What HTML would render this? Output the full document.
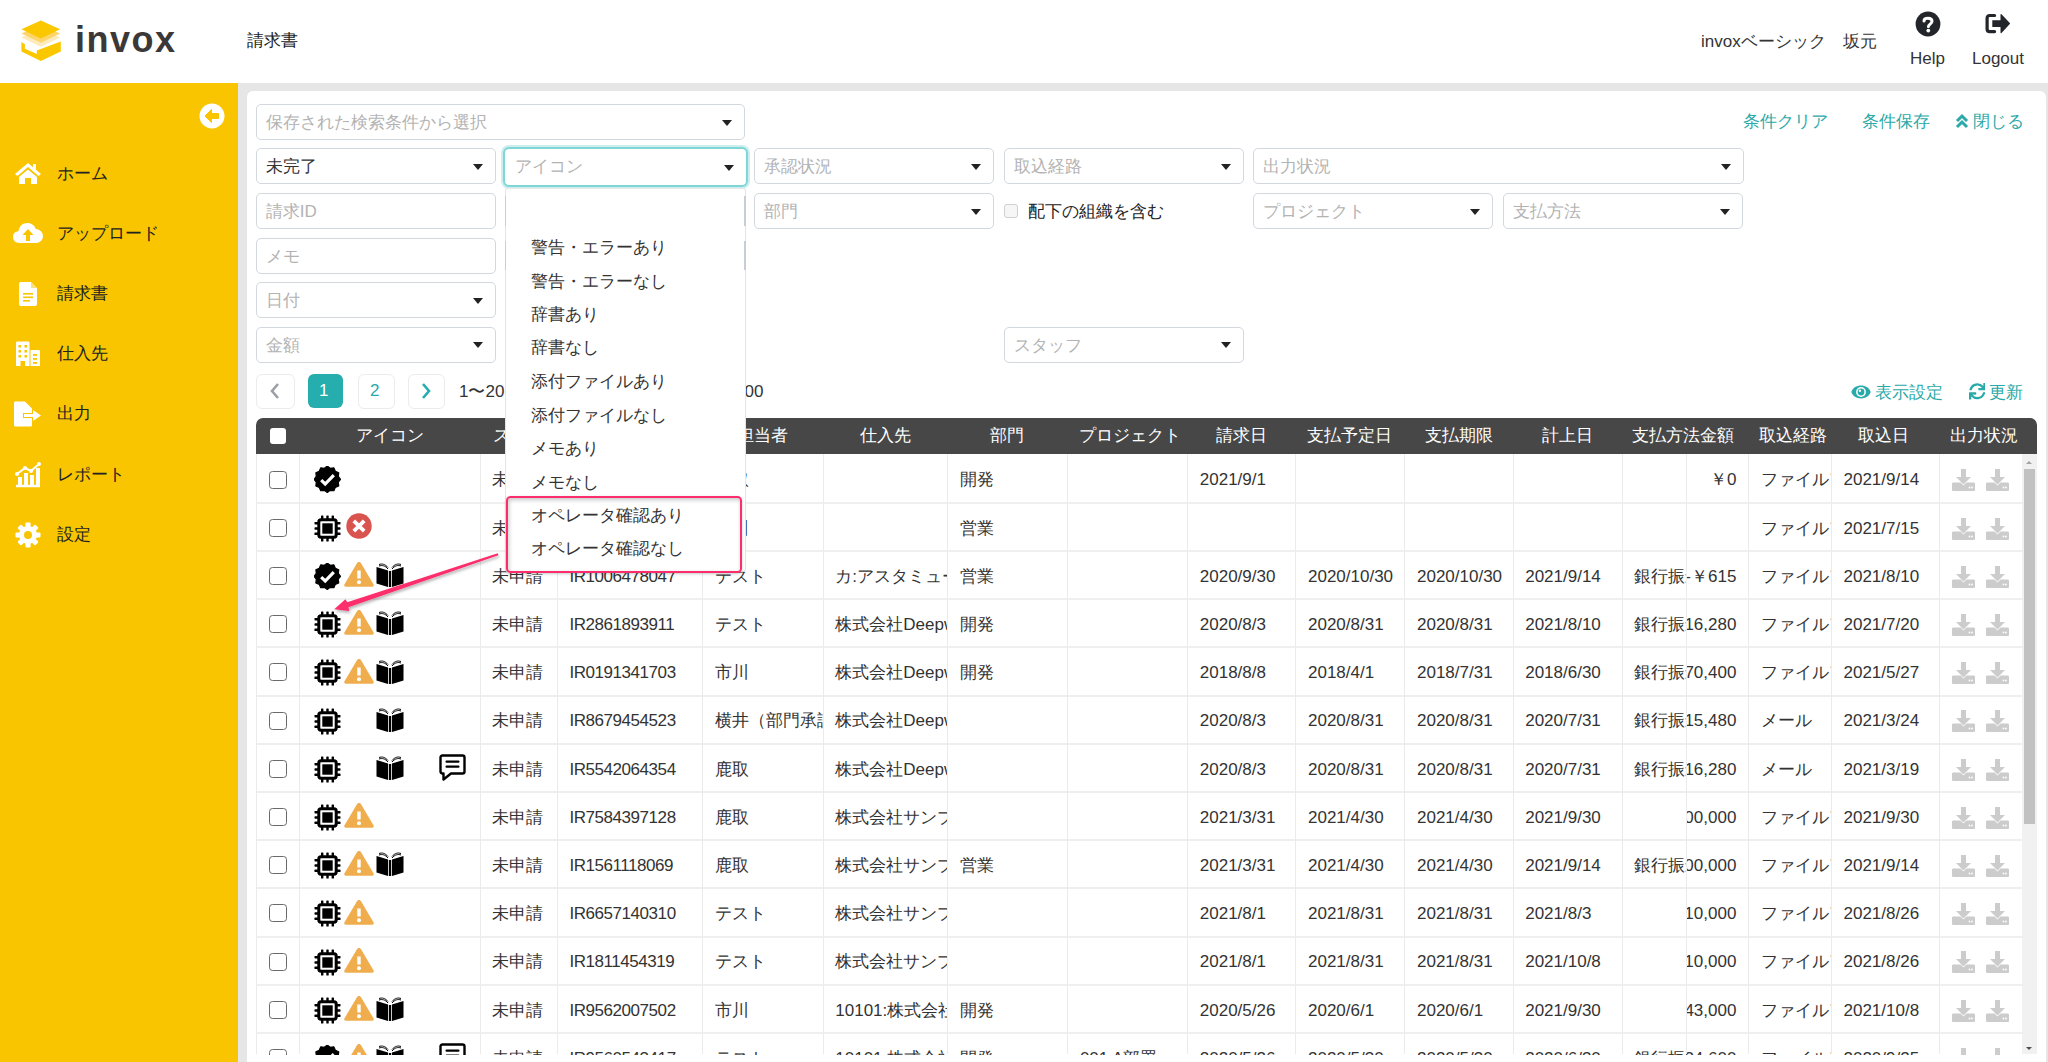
<!DOCTYPE html><html><head><meta charset="utf-8"><title>invox</title><style>
*{box-sizing:border-box;margin:0;padding:0}
html,body{width:2048px;height:1062px;overflow:hidden;background:#fff;font-family:"Liberation Sans",sans-serif;color:#333;}
.abs{position:absolute}
.t{position:absolute;white-space:nowrap;font-size:17px;line-height:20px}
.inp{position:absolute;height:36px;border:1.5px solid #d3d7de;border-radius:5px;background:#fff}
.inp .ph{position:absolute;left:9px;top:8px;font-size:17px;line-height:20px;color:#b3b3b3;white-space:nowrap}
.inp .v{position:absolute;left:9px;top:8px;font-size:17px;line-height:20px;color:#333;white-space:nowrap}
.caret{position:absolute;right:12px;top:14.5px;width:0;height:0;border-left:5px solid transparent;border-right:5px solid transparent;border-top:6px solid #222}
.nav{position:absolute;left:57px;font-size:17px;line-height:20px;color:#222;white-space:nowrap}
.teal{color:#2aa9a9}
.hl{position:absolute;height:2px;background:#efefef}
.vl{position:absolute;width:1px;background:#ebebeb}
.cell{position:absolute;overflow:hidden;white-space:nowrap;font-size:17px;line-height:20px;color:#333}
.cb{position:absolute;width:18px;height:18px;border:1.8px solid #6a6a6a;border-radius:3.5px;background:#fff}
.dd{position:absolute;font-size:17px;line-height:20px;color:#333;white-space:nowrap;left:531px}
</style></head><body>
<div class="abs" style="left:0;top:0;width:2048px;height:83px;background:#fff"></div>
<svg class="abs" style="left:20px;top:19px" width="42" height="44" viewBox="0 0 42 44">
<polygon points="1.4,18.5 20.8,9.6 40.2,18.5 20.8,27.8" fill="#feebbd"/>
<polygon points="1.4,14.4 20.8,5.5 40.2,14.4 20.8,23.7" fill="#fdd56a"/>
<polygon points="1.4,10.3 20.8,1.4 40.2,10.3 20.8,19.6" fill="#fbc800"/>
<polygon points="1.4,23.1 4.9,25.3 4.9,29.7 16.8,35 16.8,31.4 40.8,22.6 40.8,32.5 20.8,42 1.4,32.5" fill="#fbc800"/>
</svg>
<div class="t" style="left:75px;top:18px;font-size:36px;line-height:44px;font-weight:bold;color:#3c3838;letter-spacing:1.5px">invox</div>
<div class="t" style="left:247px;top:31px;color:#222">請求書</div>
<div class="t" style="left:1701px;top:32px;color:#333">invoxベーシック　坂元</div>
<svg class="abs" style="left:1914.5px;top:10.5px" width="26" height="26" viewBox="0 0 26 26">
<circle cx="13" cy="13" r="12.4" fill="#222529"/>
<path d="M9,10 C9,6.5 17,6.2 17,10.3 C17,13 13.6,13.2 13.4,15.6" stroke="#fff" stroke-width="3" fill="none" stroke-linecap="round"/>
<circle cx="13.3" cy="19.6" r="1.9" fill="#fff"/>
</svg>
<div class="t" style="left:1910px;top:49px;color:#333">Help</div>
<svg class="abs" style="left:1980px;top:10px" width="34" height="28" viewBox="0 0 34 28">
<path d="M14.6,5.5 H9.8 C8.2,5.5 7.1,6.5 7.1,8.2 V18.9 C7.1,20.6 8.2,21.6 9.8,21.6 H14.6" stroke="#222529" stroke-width="3.2" fill="none" stroke-linecap="round"/>
<path d="M12.3,10.2 H20.5 V4.6 C20.5,3.9 21,3.7 21.5,4.2 L29.8,13 C30.1,13.3 30.1,13.8 29.8,14.1 L21.5,22.9 C21,23.4 20.5,23.2 20.5,22.5 V17 H12.3 Z" fill="#222529"/>
</svg>
<div class="t" style="left:1972px;top:49px;color:#333">Logout</div>
<div class="abs" style="left:0;top:83px;width:238px;height:979px;background:#f8c500"></div>
<svg class="abs" style="left:199px;top:103px" width="26" height="26" viewBox="0 0 26 26">
<circle cx="13" cy="13" r="12.5" fill="#fff"/>
<path d="M6,13 L12.5,6.5 V10.5 H19.5 V15.5 H12.5 V19.5 Z" fill="#f8c500" stroke="#f8c500" stroke-width="1" stroke-linejoin="round"/>
</svg>
<div class="nav" style="top:163.7px">ホーム</div>
<div class="nav" style="top:223.7px">アップロード</div>
<div class="nav" style="top:283.7px">請求書</div>
<div class="nav" style="top:343.7px">仕入先</div>
<div class="nav" style="top:403.7px">出力</div>
<div class="nav" style="top:464.7px">レポート</div>
<div class="nav" style="top:524.7px">設定</div>
<svg class="abs" style="left:13px;top:161px" width="30" height="24" viewBox="0 0 30 24">
<path d="M15,2 L2,13 L4.5,15 L15,6 L25.5,15 L28,13 L23,8.8 V3 H20 V6.3 Z" fill="#fff"/>
<path d="M6,16 L15,8.5 L24,16 V23 H18 V17 H12 V23 H6 Z" fill="#fff"/>
</svg>
<svg class="abs" style="left:12px;top:221px" width="32" height="24" viewBox="0 0 32 24">
<path d="M8,22 C3,22 1,19 1,16 C1,12.5 3.5,10.5 6.5,10.3 C7,5.5 10.5,2 15.5,2 C19.5,2 22.5,4.5 23.8,8 C28,8.3 31,11.5 31,15.3 C31,19 28,22 24,22 Z" fill="#fff"/>
<path d="M16,8 L10.5,14 H14 V20 H18 V14 H21.5 Z" fill="#f8c500"/>
</svg>
<svg class="abs" style="left:17px;top:281px" width="22" height="26" viewBox="0 0 22 26">
<path d="M2,3 C2,1.5 3,1 4,1 H14 L20,7 V23 C20,24.5 19,25 18,25 H4 C3,25 2,24.5 2,23 Z" fill="#fff"/>
<path d="M14,1 V7 H20" fill="#f8c500" opacity="0.5"/>
<rect x="6" y="12" width="10" height="1.6" fill="#f8c500"/><rect x="6" y="15.5" width="10" height="1.6" fill="#f8c500"/><rect x="6" y="19" width="7" height="1.6" fill="#f8c500"/>
</svg>
<svg class="abs" style="left:15px;top:341px" width="26" height="26" viewBox="0 0 26 26">
<path d="M1,25 V2 C1,1 1.5,0.5 2.5,0.5 H13 C14,0.5 14.5,1 14.5,2 V25 H10 V20 H5.5 V25 Z" fill="#fff"/>
<path d="M15.5,25 V9 H23.5 C24.5,9 25,9.5 25,10.5 V25 Z" fill="#fff"/>
<g fill="#f8c500"><rect x="3.5" y="4" width="2.5" height="2.5"/><rect x="9.5" y="4" width="2.5" height="2.5"/><rect x="3.5" y="9" width="2.5" height="2.5"/><rect x="9.5" y="9" width="2.5" height="2.5"/><rect x="3.5" y="14" width="2.5" height="2.5"/><rect x="9.5" y="14" width="2.5" height="2.5"/>
<rect x="18" y="13" width="4" height="1.8"/><rect x="18" y="17" width="4" height="1.8"/><rect x="18" y="21" width="4" height="1.8"/></g>
</svg>
<svg class="abs" style="left:13px;top:401px" width="30" height="26" viewBox="0 0 30 26">
<path d="M1,2 C1,1 1.5,0.5 2.5,0.5 H12 L19,7.5 V12 H10 V17 H19 V24 C19,25 18.5,25.5 17.5,25.5 H2.5 C1.5,25.5 1,25 1,24 Z" fill="#fff"/>
<path d="M11,13 H20 V9 L28,14.5 L20,20 V16 H11 Z" fill="#fff"/>
</svg>
<svg class="abs" style="left:14px;top:462px" width="28" height="26" viewBox="0 0 28 26">
<path d="M2,24 H26" stroke="#fff" stroke-width="2.5"/>
<rect x="4" y="15" width="4" height="8" fill="#fff"/><rect x="10" y="11" width="4" height="12" fill="#fff"/><rect x="16" y="13" width="4" height="10" fill="#fff"/><rect x="22" y="6" width="4" height="17" fill="#fff"/>
<path d="M3,12 L11,6 L17,9 L25,2" stroke="#fff" stroke-width="2" fill="none"/>
<circle cx="3" cy="12" r="2" fill="#fff"/><circle cx="11" cy="6" r="2" fill="#fff"/><circle cx="17" cy="9" r="2" fill="#fff"/><circle cx="25" cy="2" r="2" fill="#fff"/>
</svg>
<svg class="abs" style="left:15px;top:522px" width="26" height="26" viewBox="0 0 26 26">
<path fill="#fff" d="M11,1 H15 L15.8,4.6 C16.9,4.9 17.9,5.4 18.8,6 L22,4 L24.8,6.8 L22.8,10 C23.4,10.9 23.8,11.9 24.1,13 L27.5,13.8 V17.8 L24.1,18.6 L24,18.7" transform="translate(-1.5,-2.8)" opacity="0"/>
<g transform="translate(13,13)" fill="#fff">
<circle r="9"/>
<rect x="-2.6" y="-12.5" width="5.2" height="6" rx="1"/>
<rect x="-2.6" y="-12.5" width="5.2" height="6" rx="1" transform="rotate(45)"/>
<rect x="-2.6" y="-12.5" width="5.2" height="6" rx="1" transform="rotate(90)"/>
<rect x="-2.6" y="-12.5" width="5.2" height="6" rx="1" transform="rotate(135)"/>
<rect x="-2.6" y="-12.5" width="5.2" height="6" rx="1" transform="rotate(180)"/>
<rect x="-2.6" y="-12.5" width="5.2" height="6" rx="1" transform="rotate(225)"/>
<rect x="-2.6" y="-12.5" width="5.2" height="6" rx="1" transform="rotate(270)"/>
<rect x="-2.6" y="-12.5" width="5.2" height="6" rx="1" transform="rotate(315)"/>
<circle r="4" fill="#f8c500"/>
</g>
</svg>
<div class="abs" style="left:238px;top:83px;width:1810px;height:979px;background:#e6e6e6"></div>
<div class="abs" style="left:247px;top:91px;width:1799px;height:1000px;background:#fff;border-radius:6px"></div>
<div class="inp" style="left:255.8px;top:104.2px;width:489.2px;"><div class="ph">保存された検索条件から選択</div><div class="caret"></div></div>
<div class="inp" style="left:255.8px;top:148.4px;width:240.0px;"><div class="v">未完了</div><div class="caret"></div></div>
<div class="inp" style="left:754.4px;top:148.4px;width:240.0px;"><div class="ph">承認状況</div><div class="caret"></div></div>
<div class="inp" style="left:1004.0px;top:148.4px;width:240.0px;"><div class="ph">取込経路</div><div class="caret"></div></div>
<div class="inp" style="left:1253.0px;top:148.4px;width:489.2px;width:491px"><div class="ph">出力状況</div><div class="caret"></div></div>
<div class="inp" style="left:255.8px;top:193.2px;width:240.0px;"><div class="ph">請求ID</div></div>
<div class="inp" style="left:505.0px;top:193.2px;width:240.0px;"><div class="ph"></div></div>
<div class="inp" style="left:754.4px;top:193.2px;width:240.0px;"><div class="ph">部門</div><div class="caret"></div></div>
<div class="abs" style="left:1004.3px;top:203.8px;width:14px;height:14px;border:1.5px solid #d0d0d0;border-radius:3px;background:#f6f6f6"></div>
<div class="t" style="left:1028px;top:202px;color:#222">配下の組織を含む</div>
<div class="inp" style="left:1253.0px;top:193.2px;width:240.0px;"><div class="ph">プロジェクト</div><div class="caret"></div></div>
<div class="inp" style="left:1502.5px;top:193.2px;width:240.0px;"><div class="ph">支払方法</div><div class="caret"></div></div>
<div class="inp" style="left:255.8px;top:237.7px;width:240.0px;"><div class="ph">メモ</div></div>
<div class="inp" style="left:505.0px;top:237.7px;width:240.0px;"><div class="ph"></div></div>
<div class="inp" style="left:255.8px;top:282.2px;width:240.0px;"><div class="ph">日付</div><div class="caret"></div></div>
<div class="inp" style="left:255.8px;top:326.7px;width:240.0px;"><div class="ph">金額</div><div class="caret"></div></div>
<div class="inp" style="left:1004.0px;top:326.7px;width:240.0px;"><div class="ph">スタッフ</div><div class="caret"></div></div>
<div class="inp" style="left:503px;top:146.5px;width:245px;height:40px;border:2px solid #7fd6d6;box-shadow:0 0 0 2px #cdeeee;border-radius:6px"><div class="ph" style="left:10px;top:8.5px">アイコン</div><div class="caret" style="right:12px;top:16px"></div></div>
<div class="t teal" style="left:1743px;top:112px">条件クリア</div>
<div class="t teal" style="left:1862px;top:112px">条件保存</div>
<svg class="abs" style="left:1955px;top:113px" width="14" height="17" viewBox="0 0 14 17"><path d="M2,8 L7,3 L12,8 M2,14 L7,9 L12,14" stroke="#2aa9a9" stroke-width="3" fill="none" stroke-linejoin="miter"/></svg>
<div class="t teal" style="left:1973px;top:112px">閉じる</div>
<div class="abs" style="left:256px;top:373.6px;width:38.5px;height:35px;border:1px solid #ececec;border-radius:6px"></div>
<svg class="abs" style="left:268px;top:382px" width="14" height="18" viewBox="0 0 14 18"><path d="M10,2 L4,9 L10,16" stroke="#9aa0a6" stroke-width="2.6" fill="none"/></svg>
<div class="abs" style="left:308px;top:374.2px;width:35px;height:33.6px;background:#26adad;border-radius:6px"></div>
<div class="t" style="left:319px;top:381px;color:#fff">1</div>
<div class="abs" style="left:357.5px;top:373.6px;width:37px;height:35px;border:1px solid #ececec;border-radius:6px"></div>
<div class="t teal" style="left:370px;top:381px">2</div>
<div class="abs" style="left:407.5px;top:373.6px;width:37.5px;height:35px;border:1px solid #ececec;border-radius:6px"></div>
<svg class="abs" style="left:419px;top:382px" width="14" height="18" viewBox="0 0 14 18"><path d="M4,2 L10,9 L4,16" stroke="#26adad" stroke-width="2.6" fill="none"/></svg>
<div class="t" style="left:459px;top:382px;color:#333">1〜20</div>
<div class="t" style="left:735px;top:382px;color:#333">200</div>
<svg class="abs" style="left:1851px;top:384.5px" width="20" height="14" viewBox="0 0 20 14"><path d="M0.3,7 C3,-1.6 17,-1.6 19.7,7 C17,15.6 3,15.6 0.3,7 Z" fill="#2aa9a9"/><circle cx="10" cy="7" r="4.9" fill="#fff"/><circle cx="10" cy="7" r="3.4" fill="#2aa9a9"/><circle cx="8.9" cy="5.8" r="1.2" fill="#fff"/></svg>
<div class="t teal" style="left:1875px;top:383px">表示設定</div>
<svg class="abs" style="left:1968.6px;top:383.2px" width="16.6" height="16.6" viewBox="0 0 512 512"><path fill="#2aa9a9" d="M440.65 12.57l4 82.77A247.16 247.16 0 0 0 255.83 8C134.730 8 33.91 94.92 12.29 209.82A12 12 0 0 0 24.09 224h49.05a12 12 0 0 0 11.67-9.26 175.910 175.910 0 0 1 317-56.94l-101.46-4.86a12 12 0 0 0-12.570 12v47.41a12 12 0 0 0 12 12H500a12 12 0 0 0 12-12V12a12 12 0 0 0-12-12h-47.37a12 12 0 0 0-11.98 12.57zM255.83 432a175.61 175.61 0 0 1-146-77.8l101.8 4.87a12 12 0 0 0 12.57-12v-47.4a12 12 0 0 0-12-12H12a12 12 0 0 0-12 12V500a12 12 0 0 0 12 12h47.350a12 12 0 0 0 12-12.6l-4.15-82.57A247.17 247.17 0 0 0 255.83 504c121.11 0 221.93-86.92 243.55-201.82a12 12 0 0 0-11.8-14.18h-49.05a12 12 0 0 0-11.67 9.26A175.86 175.86 0 0 1 255.83 432z"/></svg>
<div class="t teal" style="left:1989px;top:383px">更新</div>
<div class="abs" style="left:255.6px;top:418.0px;width:1781.1px;height:636.5px;overflow:hidden">
<div class="abs" style="left:0;top:0;width:1781.1px;height:36.2px;background:#474747;border-radius:7px 7px 0 0"></div>
<div class="abs" style="left:14.2px;top:9.8px;width:16.5px;height:16.5px;background:#fff;border-radius:3px"></div>
<div class="cell" style="left:43.8px;top:8px;width:180.6px;text-align:center;color:#fff;overflow:visible">アイコン</div>
<div class="cell" style="left:237.4px;top:8px;width:120px;color:#fff;overflow:visible">ステータス</div>
<div class="cell" style="left:301.4px;top:8px;width:145.5px;text-align:center;color:#fff;overflow:visible">請求ID</div>
<div class="cell" style="left:446.9px;top:8px;width:120.3px;text-align:center;color:#fff;overflow:visible">担当者</div>
<div class="cell" style="left:567.2px;top:8px;width:124.6px;text-align:center;color:#fff;overflow:visible">仕入先</div>
<div class="cell" style="left:691.8px;top:8px;width:120.0px;text-align:center;color:#fff;overflow:visible">部門</div>
<div class="cell" style="left:814.3px;top:8px;width:119.9px;text-align:center;color:#fff;overflow:visible">プロジェクト</div>
<div class="cell" style="left:931.7px;top:8px;width:108.2px;text-align:center;color:#fff;overflow:visible">請求日</div>
<div class="cell" style="left:1039.9px;top:8px;width:109.0px;text-align:center;color:#fff;overflow:visible">支払予定日</div>
<div class="cell" style="left:1148.9px;top:8px;width:108.2px;text-align:center;color:#fff;overflow:visible">支払期限</div>
<div class="cell" style="left:1257.1px;top:8px;width:108.9px;text-align:center;color:#fff;overflow:visible">計上日</div>
<div class="cell" style="left:1364.5px;top:8px;width:126.8px;text-align:center;color:#fff;overflow:visible">支払方法金額</div>
<div class="cell" style="left:1496.3px;top:8px;width:82.6px;text-align:center;color:#fff;overflow:visible">取込経路</div>
<div class="cell" style="left:1573.7px;top:8px;width:108.3px;text-align:center;color:#fff;overflow:visible">取込日</div>
<div class="cell" style="left:1686.7px;top:8px;width:84.2px;text-align:center;color:#fff;overflow:visible">出力状況</div>
<div class="hl" style="left:0;top:84px;width:1767.9px"></div>
<svg class="abs" style="left:58.9px;top:48.3px" width="27" height="27" viewBox="0 0 27 27"><polygon points="13.30,0.10 16.25,2.29 19.90,1.87 21.36,5.24 24.73,6.70 24.31,10.35 26.50,13.30 24.31,16.25 24.73,19.90 21.36,21.36 19.90,24.73 16.25,24.31 13.30,26.50 10.35,24.31 6.70,24.73 5.24,21.36 1.87,19.90 2.29,16.25 0.10,13.30 2.29,10.35 1.87,6.70 5.24,5.24 6.70,1.87 10.35,2.29" fill="#000" stroke="#000" stroke-width="1.2" stroke-linejoin="round"/><path d="M7.2,14.2 L11.2,18 L19.8,9.2" stroke="#fff" stroke-width="3.2" fill="none" stroke-linecap="butt"/></svg>
<div class="cell" style="left:224.4px;top:52.3px;width:77.0px;height:24px;padding-left:12.5px;">未申請</div>
<div class="cell" style="left:301.4px;top:52.3px;width:145.5px;height:24px;padding-left:12.5px;letter-spacing:-0.45px;">IR1009954432</div>
<div class="cell" style="left:446.9px;top:52.3px;width:120.3px;height:24px;padding-left:12.5px;">鹿取</div>
<div class="cell" style="left:691.8px;top:52.3px;width:120.0px;height:24px;padding-left:12.5px;">開発</div>
<div class="cell" style="left:931.7px;top:52.3px;width:108.2px;height:24px;padding-left:12.5px;">2021/9/1</div>
<div class="cell" style="left:1430.7px;top:52.3px;width:62.1px;height:24px"><div style="position:absolute;right:12px;top:0">￥0</div></div>
<div class="cell" style="left:1492.8px;top:52.3px;width:82.6px;height:24px;padding-left:12.5px;">ファイルアップロード</div>
<div class="cell" style="left:1575.4px;top:52.3px;width:108.3px;height:24px;padding-left:12.5px;">2021/9/14</div>
<svg class="abs" style="left:1695.9px;top:50.3px" width="25" height="24" viewBox="0 0 25 24"><rect x="10" y="1" width="5" height="9" fill="#cccccc"/><path d="M5,9 H20 L12.5,16.5 Z" fill="#cccccc"/><path d="M1,16 C1,15 1.5,14.5 2.5,14.5 H9.5 L12.5,17.5 L15.5,14.5 H22.5 C23.5,14.5 24,15 24,16 V21.5 C24,22.5 23.5,23 22.5,23 H2.5 C1.5,23 1,22.5 1,21.5 Z" fill="#cccccc"/><circle cx="18.5" cy="19.5" r="0.9" fill="#fff"/><circle cx="21" cy="19.5" r="0.9" fill="#fff"/></svg>
<svg class="abs" style="left:1729.2px;top:50.3px" width="25" height="24" viewBox="0 0 25 24"><rect x="10" y="1" width="5" height="9" fill="#cccccc"/><path d="M5,9 H20 L12.5,16.5 Z" fill="#cccccc"/><path d="M1,16 C1,15 1.5,14.5 2.5,14.5 H9.5 L12.5,17.5 L15.5,14.5 H22.5 C23.5,14.5 24,15 24,16 V21.5 C24,22.5 23.5,23 22.5,23 H2.5 C1.5,23 1,22.5 1,21.5 Z" fill="#cccccc"/><circle cx="18.5" cy="19.5" r="0.9" fill="#fff"/><circle cx="21" cy="19.5" r="0.9" fill="#fff"/></svg>
<div class="hl" style="left:0;top:132px;width:1767.9px"></div>
<svg class="abs" style="left:58.9px;top:96.7px" width="27" height="27" viewBox="0 0 27 27"><rect x="4.8" y="4.8" width="17.4" height="17.4" rx="2.2" fill="none" stroke="#000" stroke-width="3"/><rect x="8.3" y="8.3" width="10.4" height="10.4" fill="#000"/><rect x="7.0" y="0.5" width="2.4" height="4" rx="0.6" fill="#000"/><rect x="7.0" y="22.5" width="2.4" height="4" rx="0.6" fill="#000"/><rect y="7.0" x="0.5" height="2.4" width="4" rx="0.6" fill="#000"/><rect y="7.0" x="22.5" height="2.4" width="4" rx="0.6" fill="#000"/><rect x="12.3" y="0.5" width="2.4" height="4" rx="0.6" fill="#000"/><rect x="12.3" y="22.5" width="2.4" height="4" rx="0.6" fill="#000"/><rect y="12.3" x="0.5" height="2.4" width="4" rx="0.6" fill="#000"/><rect y="12.3" x="22.5" height="2.4" width="4" rx="0.6" fill="#000"/><rect x="17.6" y="0.5" width="2.4" height="4" rx="0.6" fill="#000"/><rect x="17.6" y="22.5" width="2.4" height="4" rx="0.6" fill="#000"/><rect y="17.6" x="0.5" height="2.4" width="4" rx="0.6" fill="#000"/><rect y="17.6" x="22.5" height="2.4" width="4" rx="0.6" fill="#000"/></svg>
<svg class="abs" style="left:90.4px;top:95.2px" width="26" height="26" viewBox="0 0 26 26"><circle cx="13" cy="13" r="12.7" fill="#d9534f"/><path d="M7.8,7.8 L18.2,18.2 M18.2,7.8 L7.8,18.2" stroke="#fff" stroke-width="3.8"/></svg>
<div class="cell" style="left:224.4px;top:100.5px;width:77.0px;height:24px;padding-left:12.5px;">未申請</div>
<div class="cell" style="left:301.4px;top:100.5px;width:145.5px;height:24px;padding-left:12.5px;letter-spacing:-0.45px;">IR1008859931</div>
<div class="cell" style="left:446.9px;top:100.5px;width:120.3px;height:24px;padding-left:12.5px;">市川</div>
<div class="cell" style="left:691.8px;top:100.5px;width:120.0px;height:24px;padding-left:12.5px;">営業</div>
<div class="cell" style="left:1492.8px;top:100.5px;width:82.6px;height:24px;padding-left:12.5px;">ファイルアップロード</div>
<div class="cell" style="left:1575.4px;top:100.5px;width:108.3px;height:24px;padding-left:12.5px;">2021/7/15</div>
<svg class="abs" style="left:1695.9px;top:98.5px" width="25" height="24" viewBox="0 0 25 24"><rect x="10" y="1" width="5" height="9" fill="#cccccc"/><path d="M5,9 H20 L12.5,16.5 Z" fill="#cccccc"/><path d="M1,16 C1,15 1.5,14.5 2.5,14.5 H9.5 L12.5,17.5 L15.5,14.5 H22.5 C23.5,14.5 24,15 24,16 V21.5 C24,22.5 23.5,23 22.5,23 H2.5 C1.5,23 1,22.5 1,21.5 Z" fill="#cccccc"/><circle cx="18.5" cy="19.5" r="0.9" fill="#fff"/><circle cx="21" cy="19.5" r="0.9" fill="#fff"/></svg>
<svg class="abs" style="left:1729.2px;top:98.5px" width="25" height="24" viewBox="0 0 25 24"><rect x="10" y="1" width="5" height="9" fill="#cccccc"/><path d="M5,9 H20 L12.5,16.5 Z" fill="#cccccc"/><path d="M1,16 C1,15 1.5,14.5 2.5,14.5 H9.5 L12.5,17.5 L15.5,14.5 H22.5 C23.5,14.5 24,15 24,16 V21.5 C24,22.5 23.5,23 22.5,23 H2.5 C1.5,23 1,22.5 1,21.5 Z" fill="#cccccc"/><circle cx="18.5" cy="19.5" r="0.9" fill="#fff"/><circle cx="21" cy="19.5" r="0.9" fill="#fff"/></svg>
<div class="hl" style="left:0;top:180px;width:1767.9px"></div>
<svg class="abs" style="left:58.9px;top:144.7px" width="27" height="27" viewBox="0 0 27 27"><polygon points="13.30,0.10 16.25,2.29 19.90,1.87 21.36,5.24 24.73,6.70 24.31,10.35 26.50,13.30 24.31,16.25 24.73,19.90 21.36,21.36 19.90,24.73 16.25,24.31 13.30,26.50 10.35,24.31 6.70,24.73 5.24,21.36 1.87,19.90 2.29,16.25 0.10,13.30 2.29,10.35 1.87,6.70 5.24,5.24 6.70,1.87 10.35,2.29" fill="#000" stroke="#000" stroke-width="1.2" stroke-linejoin="round"/><path d="M7.2,14.2 L11.2,18 L19.8,9.2" stroke="#fff" stroke-width="3.2" fill="none" stroke-linecap="butt"/></svg>
<svg class="abs" style="left:88.4px;top:143.2px" width="30" height="27" viewBox="0 0 30 27"><path d="M15,1 C16,1 16.6,1.5 17.2,2.5 L29.6,23.5 C30.2,24.6 29.6,25.8 28.2,25.8 H1.8 C0.4,25.8 -0.2,24.6 0.4,23.5 L12.8,2.5 C13.4,1.5 14,1 15,1 Z" fill="#f0ad4e"/><rect x="13.3" y="9.5" width="3.4" height="8" fill="#fff"/><circle cx="15" cy="21.2" r="2" fill="#fff"/></svg>
<svg class="abs" style="left:120.9px;top:144.2px" width="28" height="26" viewBox="0 0 28 26"><path d="M0.5,5 L12,8.5 V25 L0.5,21.5 Z" fill="#000"/><path d="M27.5,5 L16,8.5 V25 L27.5,21.5 Z" fill="#000"/><rect x="12.8" y="9" width="2.4" height="16" fill="#000"/><path d="M3,4 C6,3 9,3.5 12,7 M25,4 C22,3 19,3.5 16,7 M3,2.5 C6,1.5 9,2 12,5.5 M25,2.5 C22,1.5 19,2 16,5.5" stroke="#000" stroke-width="1" fill="none"/></svg>
<div class="cell" style="left:224.4px;top:148.7px;width:77.0px;height:24px;padding-left:12.5px;">未申請</div>
<div class="cell" style="left:301.4px;top:148.7px;width:145.5px;height:24px;padding-left:12.5px;letter-spacing:-0.45px;">IR1006478047</div>
<div class="cell" style="left:446.9px;top:148.7px;width:120.3px;height:24px;padding-left:12.5px;">テスト</div>
<div class="cell" style="left:567.2px;top:148.7px;width:124.6px;height:24px;padding-left:12.5px;">カ:アスタミュージック</div>
<div class="cell" style="left:691.8px;top:148.7px;width:120.0px;height:24px;padding-left:12.5px;">営業</div>
<div class="cell" style="left:931.7px;top:148.7px;width:108.2px;height:24px;padding-left:12.5px;">2020/9/30</div>
<div class="cell" style="left:1039.9px;top:148.7px;width:109.0px;height:24px;padding-left:12.5px;">2020/10/30</div>
<div class="cell" style="left:1148.9px;top:148.7px;width:108.2px;height:24px;padding-left:12.5px;">2020/10/30</div>
<div class="cell" style="left:1257.1px;top:148.7px;width:108.9px;height:24px;padding-left:12.5px;">2021/9/14</div>
<div class="cell" style="left:1366.0px;top:148.7px;width:64.7px;height:24px;padding-left:12.5px;">銀行振込</div>
<div class="cell" style="left:1430.7px;top:148.7px;width:62.1px;height:24px"><div style="position:absolute;right:12px;top:0">-￥615</div></div>
<div class="cell" style="left:1492.8px;top:148.7px;width:82.6px;height:24px;padding-left:12.5px;">ファイルアップロード</div>
<div class="cell" style="left:1575.4px;top:148.7px;width:108.3px;height:24px;padding-left:12.5px;">2021/8/10</div>
<svg class="abs" style="left:1695.9px;top:146.7px" width="25" height="24" viewBox="0 0 25 24"><rect x="10" y="1" width="5" height="9" fill="#cccccc"/><path d="M5,9 H20 L12.5,16.5 Z" fill="#cccccc"/><path d="M1,16 C1,15 1.5,14.5 2.5,14.5 H9.5 L12.5,17.5 L15.5,14.5 H22.5 C23.5,14.5 24,15 24,16 V21.5 C24,22.5 23.5,23 22.5,23 H2.5 C1.5,23 1,22.5 1,21.5 Z" fill="#cccccc"/><circle cx="18.5" cy="19.5" r="0.9" fill="#fff"/><circle cx="21" cy="19.5" r="0.9" fill="#fff"/></svg>
<svg class="abs" style="left:1729.2px;top:146.7px" width="25" height="24" viewBox="0 0 25 24"><rect x="10" y="1" width="5" height="9" fill="#cccccc"/><path d="M5,9 H20 L12.5,16.5 Z" fill="#cccccc"/><path d="M1,16 C1,15 1.5,14.5 2.5,14.5 H9.5 L12.5,17.5 L15.5,14.5 H22.5 C23.5,14.5 24,15 24,16 V21.5 C24,22.5 23.5,23 22.5,23 H2.5 C1.5,23 1,22.5 1,21.5 Z" fill="#cccccc"/><circle cx="18.5" cy="19.5" r="0.9" fill="#fff"/><circle cx="21" cy="19.5" r="0.9" fill="#fff"/></svg>
<div class="hl" style="left:0;top:228px;width:1767.9px"></div>
<svg class="abs" style="left:58.9px;top:193.1px" width="27" height="27" viewBox="0 0 27 27"><rect x="4.8" y="4.8" width="17.4" height="17.4" rx="2.2" fill="none" stroke="#000" stroke-width="3"/><rect x="8.3" y="8.3" width="10.4" height="10.4" fill="#000"/><rect x="7.0" y="0.5" width="2.4" height="4" rx="0.6" fill="#000"/><rect x="7.0" y="22.5" width="2.4" height="4" rx="0.6" fill="#000"/><rect y="7.0" x="0.5" height="2.4" width="4" rx="0.6" fill="#000"/><rect y="7.0" x="22.5" height="2.4" width="4" rx="0.6" fill="#000"/><rect x="12.3" y="0.5" width="2.4" height="4" rx="0.6" fill="#000"/><rect x="12.3" y="22.5" width="2.4" height="4" rx="0.6" fill="#000"/><rect y="12.3" x="0.5" height="2.4" width="4" rx="0.6" fill="#000"/><rect y="12.3" x="22.5" height="2.4" width="4" rx="0.6" fill="#000"/><rect x="17.6" y="0.5" width="2.4" height="4" rx="0.6" fill="#000"/><rect x="17.6" y="22.5" width="2.4" height="4" rx="0.6" fill="#000"/><rect y="17.6" x="0.5" height="2.4" width="4" rx="0.6" fill="#000"/><rect y="17.6" x="22.5" height="2.4" width="4" rx="0.6" fill="#000"/></svg>
<svg class="abs" style="left:88.4px;top:191.4px" width="30" height="27" viewBox="0 0 30 27"><path d="M15,1 C16,1 16.6,1.5 17.2,2.5 L29.6,23.5 C30.2,24.6 29.6,25.8 28.2,25.8 H1.8 C0.4,25.8 -0.2,24.6 0.4,23.5 L12.8,2.5 C13.4,1.5 14,1 15,1 Z" fill="#f0ad4e"/><rect x="13.3" y="9.5" width="3.4" height="8" fill="#fff"/><circle cx="15" cy="21.2" r="2" fill="#fff"/></svg>
<svg class="abs" style="left:120.9px;top:192.4px" width="28" height="26" viewBox="0 0 28 26"><path d="M0.5,5 L12,8.5 V25 L0.5,21.5 Z" fill="#000"/><path d="M27.5,5 L16,8.5 V25 L27.5,21.5 Z" fill="#000"/><rect x="12.8" y="9" width="2.4" height="16" fill="#000"/><path d="M3,4 C6,3 9,3.5 12,7 M25,4 C22,3 19,3.5 16,7 M3,2.5 C6,1.5 9,2 12,5.5 M25,2.5 C22,1.5 19,2 16,5.5" stroke="#000" stroke-width="1" fill="none"/></svg>
<div class="cell" style="left:224.4px;top:196.9px;width:77.0px;height:24px;padding-left:12.5px;">未申請</div>
<div class="cell" style="left:301.4px;top:196.9px;width:145.5px;height:24px;padding-left:12.5px;letter-spacing:-0.45px;">IR2861893911</div>
<div class="cell" style="left:446.9px;top:196.9px;width:120.3px;height:24px;padding-left:12.5px;">テスト</div>
<div class="cell" style="left:567.2px;top:196.9px;width:124.6px;height:24px;padding-left:12.5px;">株式会社Deepwork</div>
<div class="cell" style="left:691.8px;top:196.9px;width:120.0px;height:24px;padding-left:12.5px;">開発</div>
<div class="cell" style="left:931.7px;top:196.9px;width:108.2px;height:24px;padding-left:12.5px;">2020/8/3</div>
<div class="cell" style="left:1039.9px;top:196.9px;width:109.0px;height:24px;padding-left:12.5px;">2020/8/31</div>
<div class="cell" style="left:1148.9px;top:196.9px;width:108.2px;height:24px;padding-left:12.5px;">2020/8/31</div>
<div class="cell" style="left:1257.1px;top:196.9px;width:108.9px;height:24px;padding-left:12.5px;">2021/8/10</div>
<div class="cell" style="left:1366.0px;top:196.9px;width:64.7px;height:24px;padding-left:12.5px;">銀行振込</div>
<div class="cell" style="left:1430.7px;top:196.9px;width:62.1px;height:24px"><div style="position:absolute;right:12px;top:0">16,280</div></div>
<div class="cell" style="left:1492.8px;top:196.9px;width:82.6px;height:24px;padding-left:12.5px;">ファイルアップロード</div>
<div class="cell" style="left:1575.4px;top:196.9px;width:108.3px;height:24px;padding-left:12.5px;">2021/7/20</div>
<svg class="abs" style="left:1695.9px;top:194.9px" width="25" height="24" viewBox="0 0 25 24"><rect x="10" y="1" width="5" height="9" fill="#cccccc"/><path d="M5,9 H20 L12.5,16.5 Z" fill="#cccccc"/><path d="M1,16 C1,15 1.5,14.5 2.5,14.5 H9.5 L12.5,17.5 L15.5,14.5 H22.5 C23.5,14.5 24,15 24,16 V21.5 C24,22.5 23.5,23 22.5,23 H2.5 C1.5,23 1,22.5 1,21.5 Z" fill="#cccccc"/><circle cx="18.5" cy="19.5" r="0.9" fill="#fff"/><circle cx="21" cy="19.5" r="0.9" fill="#fff"/></svg>
<svg class="abs" style="left:1729.2px;top:194.9px" width="25" height="24" viewBox="0 0 25 24"><rect x="10" y="1" width="5" height="9" fill="#cccccc"/><path d="M5,9 H20 L12.5,16.5 Z" fill="#cccccc"/><path d="M1,16 C1,15 1.5,14.5 2.5,14.5 H9.5 L12.5,17.5 L15.5,14.5 H22.5 C23.5,14.5 24,15 24,16 V21.5 C24,22.5 23.5,23 22.5,23 H2.5 C1.5,23 1,22.5 1,21.5 Z" fill="#cccccc"/><circle cx="18.5" cy="19.5" r="0.9" fill="#fff"/><circle cx="21" cy="19.5" r="0.9" fill="#fff"/></svg>
<div class="hl" style="left:0;top:277px;width:1767.9px"></div>
<svg class="abs" style="left:58.9px;top:241.3px" width="27" height="27" viewBox="0 0 27 27"><rect x="4.8" y="4.8" width="17.4" height="17.4" rx="2.2" fill="none" stroke="#000" stroke-width="3"/><rect x="8.3" y="8.3" width="10.4" height="10.4" fill="#000"/><rect x="7.0" y="0.5" width="2.4" height="4" rx="0.6" fill="#000"/><rect x="7.0" y="22.5" width="2.4" height="4" rx="0.6" fill="#000"/><rect y="7.0" x="0.5" height="2.4" width="4" rx="0.6" fill="#000"/><rect y="7.0" x="22.5" height="2.4" width="4" rx="0.6" fill="#000"/><rect x="12.3" y="0.5" width="2.4" height="4" rx="0.6" fill="#000"/><rect x="12.3" y="22.5" width="2.4" height="4" rx="0.6" fill="#000"/><rect y="12.3" x="0.5" height="2.4" width="4" rx="0.6" fill="#000"/><rect y="12.3" x="22.5" height="2.4" width="4" rx="0.6" fill="#000"/><rect x="17.6" y="0.5" width="2.4" height="4" rx="0.6" fill="#000"/><rect x="17.6" y="22.5" width="2.4" height="4" rx="0.6" fill="#000"/><rect y="17.6" x="0.5" height="2.4" width="4" rx="0.6" fill="#000"/><rect y="17.6" x="22.5" height="2.4" width="4" rx="0.6" fill="#000"/></svg>
<svg class="abs" style="left:88.4px;top:239.6px" width="30" height="27" viewBox="0 0 30 27"><path d="M15,1 C16,1 16.6,1.5 17.2,2.5 L29.6,23.5 C30.2,24.6 29.6,25.8 28.2,25.8 H1.8 C0.4,25.8 -0.2,24.6 0.4,23.5 L12.8,2.5 C13.4,1.5 14,1 15,1 Z" fill="#f0ad4e"/><rect x="13.3" y="9.5" width="3.4" height="8" fill="#fff"/><circle cx="15" cy="21.2" r="2" fill="#fff"/></svg>
<svg class="abs" style="left:120.9px;top:240.6px" width="28" height="26" viewBox="0 0 28 26"><path d="M0.5,5 L12,8.5 V25 L0.5,21.5 Z" fill="#000"/><path d="M27.5,5 L16,8.5 V25 L27.5,21.5 Z" fill="#000"/><rect x="12.8" y="9" width="2.4" height="16" fill="#000"/><path d="M3,4 C6,3 9,3.5 12,7 M25,4 C22,3 19,3.5 16,7 M3,2.5 C6,1.5 9,2 12,5.5 M25,2.5 C22,1.5 19,2 16,5.5" stroke="#000" stroke-width="1" fill="none"/></svg>
<div class="cell" style="left:224.4px;top:245.1px;width:77.0px;height:24px;padding-left:12.5px;">未申請</div>
<div class="cell" style="left:301.4px;top:245.1px;width:145.5px;height:24px;padding-left:12.5px;letter-spacing:-0.45px;">IR0191341703</div>
<div class="cell" style="left:446.9px;top:245.1px;width:120.3px;height:24px;padding-left:12.5px;">市川</div>
<div class="cell" style="left:567.2px;top:245.1px;width:124.6px;height:24px;padding-left:12.5px;">株式会社Deepwork</div>
<div class="cell" style="left:691.8px;top:245.1px;width:120.0px;height:24px;padding-left:12.5px;">開発</div>
<div class="cell" style="left:931.7px;top:245.1px;width:108.2px;height:24px;padding-left:12.5px;">2018/8/8</div>
<div class="cell" style="left:1039.9px;top:245.1px;width:109.0px;height:24px;padding-left:12.5px;">2018/4/1</div>
<div class="cell" style="left:1148.9px;top:245.1px;width:108.2px;height:24px;padding-left:12.5px;">2018/7/31</div>
<div class="cell" style="left:1257.1px;top:245.1px;width:108.9px;height:24px;padding-left:12.5px;">2018/6/30</div>
<div class="cell" style="left:1366.0px;top:245.1px;width:64.7px;height:24px;padding-left:12.5px;">銀行振込</div>
<div class="cell" style="left:1430.7px;top:245.1px;width:62.1px;height:24px"><div style="position:absolute;right:12px;top:0">70,400</div></div>
<div class="cell" style="left:1492.8px;top:245.1px;width:82.6px;height:24px;padding-left:12.5px;">ファイルアップロード</div>
<div class="cell" style="left:1575.4px;top:245.1px;width:108.3px;height:24px;padding-left:12.5px;">2021/5/27</div>
<svg class="abs" style="left:1695.9px;top:243.1px" width="25" height="24" viewBox="0 0 25 24"><rect x="10" y="1" width="5" height="9" fill="#cccccc"/><path d="M5,9 H20 L12.5,16.5 Z" fill="#cccccc"/><path d="M1,16 C1,15 1.5,14.5 2.5,14.5 H9.5 L12.5,17.5 L15.5,14.5 H22.5 C23.5,14.5 24,15 24,16 V21.5 C24,22.5 23.5,23 22.5,23 H2.5 C1.5,23 1,22.5 1,21.5 Z" fill="#cccccc"/><circle cx="18.5" cy="19.5" r="0.9" fill="#fff"/><circle cx="21" cy="19.5" r="0.9" fill="#fff"/></svg>
<svg class="abs" style="left:1729.2px;top:243.1px" width="25" height="24" viewBox="0 0 25 24"><rect x="10" y="1" width="5" height="9" fill="#cccccc"/><path d="M5,9 H20 L12.5,16.5 Z" fill="#cccccc"/><path d="M1,16 C1,15 1.5,14.5 2.5,14.5 H9.5 L12.5,17.5 L15.5,14.5 H22.5 C23.5,14.5 24,15 24,16 V21.5 C24,22.5 23.5,23 22.5,23 H2.5 C1.5,23 1,22.5 1,21.5 Z" fill="#cccccc"/><circle cx="18.5" cy="19.5" r="0.9" fill="#fff"/><circle cx="21" cy="19.5" r="0.9" fill="#fff"/></svg>
<div class="hl" style="left:0;top:325px;width:1767.9px"></div>
<svg class="abs" style="left:58.9px;top:289.5px" width="27" height="27" viewBox="0 0 27 27"><rect x="4.8" y="4.8" width="17.4" height="17.4" rx="2.2" fill="none" stroke="#000" stroke-width="3"/><rect x="8.3" y="8.3" width="10.4" height="10.4" fill="#000"/><rect x="7.0" y="0.5" width="2.4" height="4" rx="0.6" fill="#000"/><rect x="7.0" y="22.5" width="2.4" height="4" rx="0.6" fill="#000"/><rect y="7.0" x="0.5" height="2.4" width="4" rx="0.6" fill="#000"/><rect y="7.0" x="22.5" height="2.4" width="4" rx="0.6" fill="#000"/><rect x="12.3" y="0.5" width="2.4" height="4" rx="0.6" fill="#000"/><rect x="12.3" y="22.5" width="2.4" height="4" rx="0.6" fill="#000"/><rect y="12.3" x="0.5" height="2.4" width="4" rx="0.6" fill="#000"/><rect y="12.3" x="22.5" height="2.4" width="4" rx="0.6" fill="#000"/><rect x="17.6" y="0.5" width="2.4" height="4" rx="0.6" fill="#000"/><rect x="17.6" y="22.5" width="2.4" height="4" rx="0.6" fill="#000"/><rect y="17.6" x="0.5" height="2.4" width="4" rx="0.6" fill="#000"/><rect y="17.6" x="22.5" height="2.4" width="4" rx="0.6" fill="#000"/></svg>
<svg class="abs" style="left:120.9px;top:288.8px" width="28" height="26" viewBox="0 0 28 26"><path d="M0.5,5 L12,8.5 V25 L0.5,21.5 Z" fill="#000"/><path d="M27.5,5 L16,8.5 V25 L27.5,21.5 Z" fill="#000"/><rect x="12.8" y="9" width="2.4" height="16" fill="#000"/><path d="M3,4 C6,3 9,3.5 12,7 M25,4 C22,3 19,3.5 16,7 M3,2.5 C6,1.5 9,2 12,5.5 M25,2.5 C22,1.5 19,2 16,5.5" stroke="#000" stroke-width="1" fill="none"/></svg>
<div class="cell" style="left:224.4px;top:293.3px;width:77.0px;height:24px;padding-left:12.5px;">未申請</div>
<div class="cell" style="left:301.4px;top:293.3px;width:145.5px;height:24px;padding-left:12.5px;letter-spacing:-0.45px;">IR8679454523</div>
<div class="cell" style="left:446.9px;top:293.3px;width:120.3px;height:24px;padding-left:12.5px;">横井（部門承認者）</div>
<div class="cell" style="left:567.2px;top:293.3px;width:124.6px;height:24px;padding-left:12.5px;">株式会社Deepwork</div>
<div class="cell" style="left:931.7px;top:293.3px;width:108.2px;height:24px;padding-left:12.5px;">2020/8/3</div>
<div class="cell" style="left:1039.9px;top:293.3px;width:109.0px;height:24px;padding-left:12.5px;">2020/8/31</div>
<div class="cell" style="left:1148.9px;top:293.3px;width:108.2px;height:24px;padding-left:12.5px;">2020/8/31</div>
<div class="cell" style="left:1257.1px;top:293.3px;width:108.9px;height:24px;padding-left:12.5px;">2020/7/31</div>
<div class="cell" style="left:1366.0px;top:293.3px;width:64.7px;height:24px;padding-left:12.5px;">銀行振込</div>
<div class="cell" style="left:1430.7px;top:293.3px;width:62.1px;height:24px"><div style="position:absolute;right:12px;top:0">15,480</div></div>
<div class="cell" style="left:1492.8px;top:293.3px;width:82.6px;height:24px;padding-left:12.5px;">メール</div>
<div class="cell" style="left:1575.4px;top:293.3px;width:108.3px;height:24px;padding-left:12.5px;">2021/3/24</div>
<svg class="abs" style="left:1695.9px;top:291.3px" width="25" height="24" viewBox="0 0 25 24"><rect x="10" y="1" width="5" height="9" fill="#cccccc"/><path d="M5,9 H20 L12.5,16.5 Z" fill="#cccccc"/><path d="M1,16 C1,15 1.5,14.5 2.5,14.5 H9.5 L12.5,17.5 L15.5,14.5 H22.5 C23.5,14.5 24,15 24,16 V21.5 C24,22.5 23.5,23 22.5,23 H2.5 C1.5,23 1,22.5 1,21.5 Z" fill="#cccccc"/><circle cx="18.5" cy="19.5" r="0.9" fill="#fff"/><circle cx="21" cy="19.5" r="0.9" fill="#fff"/></svg>
<svg class="abs" style="left:1729.2px;top:291.3px" width="25" height="24" viewBox="0 0 25 24"><rect x="10" y="1" width="5" height="9" fill="#cccccc"/><path d="M5,9 H20 L12.5,16.5 Z" fill="#cccccc"/><path d="M1,16 C1,15 1.5,14.5 2.5,14.5 H9.5 L12.5,17.5 L15.5,14.5 H22.5 C23.5,14.5 24,15 24,16 V21.5 C24,22.5 23.5,23 22.5,23 H2.5 C1.5,23 1,22.5 1,21.5 Z" fill="#cccccc"/><circle cx="18.5" cy="19.5" r="0.9" fill="#fff"/><circle cx="21" cy="19.5" r="0.9" fill="#fff"/></svg>
<div class="hl" style="left:0;top:373px;width:1767.9px"></div>
<svg class="abs" style="left:58.9px;top:337.7px" width="27" height="27" viewBox="0 0 27 27"><rect x="4.8" y="4.8" width="17.4" height="17.4" rx="2.2" fill="none" stroke="#000" stroke-width="3"/><rect x="8.3" y="8.3" width="10.4" height="10.4" fill="#000"/><rect x="7.0" y="0.5" width="2.4" height="4" rx="0.6" fill="#000"/><rect x="7.0" y="22.5" width="2.4" height="4" rx="0.6" fill="#000"/><rect y="7.0" x="0.5" height="2.4" width="4" rx="0.6" fill="#000"/><rect y="7.0" x="22.5" height="2.4" width="4" rx="0.6" fill="#000"/><rect x="12.3" y="0.5" width="2.4" height="4" rx="0.6" fill="#000"/><rect x="12.3" y="22.5" width="2.4" height="4" rx="0.6" fill="#000"/><rect y="12.3" x="0.5" height="2.4" width="4" rx="0.6" fill="#000"/><rect y="12.3" x="22.5" height="2.4" width="4" rx="0.6" fill="#000"/><rect x="17.6" y="0.5" width="2.4" height="4" rx="0.6" fill="#000"/><rect x="17.6" y="22.5" width="2.4" height="4" rx="0.6" fill="#000"/><rect y="17.6" x="0.5" height="2.4" width="4" rx="0.6" fill="#000"/><rect y="17.6" x="22.5" height="2.4" width="4" rx="0.6" fill="#000"/></svg>
<svg class="abs" style="left:120.9px;top:337.0px" width="28" height="26" viewBox="0 0 28 26"><path d="M0.5,5 L12,8.5 V25 L0.5,21.5 Z" fill="#000"/><path d="M27.5,5 L16,8.5 V25 L27.5,21.5 Z" fill="#000"/><rect x="12.8" y="9" width="2.4" height="16" fill="#000"/><path d="M3,4 C6,3 9,3.5 12,7 M25,4 C22,3 19,3.5 16,7 M3,2.5 C6,1.5 9,2 12,5.5 M25,2.5 C22,1.5 19,2 16,5.5" stroke="#000" stroke-width="1" fill="none"/></svg>
<svg class="abs" style="left:183.9px;top:336.0px" width="27" height="27" viewBox="0 0 27 27"><path d="M3.5,1.5 H23.5 C24.7,1.5 25.5,2.3 25.5,3.5 V17.5 C25.5,18.7 24.7,19.5 23.5,19.5 H12 L4.5,25.5 V19.5 H3.5 C2.3,19.5 1.5,18.7 1.5,17.5 V3.5 C1.5,2.3 2.3,1.5 3.5,1.5 Z" fill="none" stroke="#000" stroke-width="2.4" stroke-linejoin="round"/><rect x="6.5" y="6.5" width="14" height="2.2" rx="1" fill="#000"/><rect x="6.5" y="11.5" width="14" height="2.2" rx="1" fill="#000"/></svg>
<div class="cell" style="left:224.4px;top:341.5px;width:77.0px;height:24px;padding-left:12.5px;">未申請</div>
<div class="cell" style="left:301.4px;top:341.5px;width:145.5px;height:24px;padding-left:12.5px;letter-spacing:-0.45px;">IR5542064354</div>
<div class="cell" style="left:446.9px;top:341.5px;width:120.3px;height:24px;padding-left:12.5px;">鹿取</div>
<div class="cell" style="left:567.2px;top:341.5px;width:124.6px;height:24px;padding-left:12.5px;">株式会社Deepwork</div>
<div class="cell" style="left:931.7px;top:341.5px;width:108.2px;height:24px;padding-left:12.5px;">2020/8/3</div>
<div class="cell" style="left:1039.9px;top:341.5px;width:109.0px;height:24px;padding-left:12.5px;">2020/8/31</div>
<div class="cell" style="left:1148.9px;top:341.5px;width:108.2px;height:24px;padding-left:12.5px;">2020/8/31</div>
<div class="cell" style="left:1257.1px;top:341.5px;width:108.9px;height:24px;padding-left:12.5px;">2020/7/31</div>
<div class="cell" style="left:1366.0px;top:341.5px;width:64.7px;height:24px;padding-left:12.5px;">銀行振込</div>
<div class="cell" style="left:1430.7px;top:341.5px;width:62.1px;height:24px"><div style="position:absolute;right:12px;top:0">16,280</div></div>
<div class="cell" style="left:1492.8px;top:341.5px;width:82.6px;height:24px;padding-left:12.5px;">メール</div>
<div class="cell" style="left:1575.4px;top:341.5px;width:108.3px;height:24px;padding-left:12.5px;">2021/3/19</div>
<svg class="abs" style="left:1695.9px;top:339.5px" width="25" height="24" viewBox="0 0 25 24"><rect x="10" y="1" width="5" height="9" fill="#cccccc"/><path d="M5,9 H20 L12.5,16.5 Z" fill="#cccccc"/><path d="M1,16 C1,15 1.5,14.5 2.5,14.5 H9.5 L12.5,17.5 L15.5,14.5 H22.5 C23.5,14.5 24,15 24,16 V21.5 C24,22.5 23.5,23 22.5,23 H2.5 C1.5,23 1,22.5 1,21.5 Z" fill="#cccccc"/><circle cx="18.5" cy="19.5" r="0.9" fill="#fff"/><circle cx="21" cy="19.5" r="0.9" fill="#fff"/></svg>
<svg class="abs" style="left:1729.2px;top:339.5px" width="25" height="24" viewBox="0 0 25 24"><rect x="10" y="1" width="5" height="9" fill="#cccccc"/><path d="M5,9 H20 L12.5,16.5 Z" fill="#cccccc"/><path d="M1,16 C1,15 1.5,14.5 2.5,14.5 H9.5 L12.5,17.5 L15.5,14.5 H22.5 C23.5,14.5 24,15 24,16 V21.5 C24,22.5 23.5,23 22.5,23 H2.5 C1.5,23 1,22.5 1,21.5 Z" fill="#cccccc"/><circle cx="18.5" cy="19.5" r="0.9" fill="#fff"/><circle cx="21" cy="19.5" r="0.9" fill="#fff"/></svg>
<div class="hl" style="left:0;top:421px;width:1767.9px"></div>
<svg class="abs" style="left:58.9px;top:385.9px" width="27" height="27" viewBox="0 0 27 27"><rect x="4.8" y="4.8" width="17.4" height="17.4" rx="2.2" fill="none" stroke="#000" stroke-width="3"/><rect x="8.3" y="8.3" width="10.4" height="10.4" fill="#000"/><rect x="7.0" y="0.5" width="2.4" height="4" rx="0.6" fill="#000"/><rect x="7.0" y="22.5" width="2.4" height="4" rx="0.6" fill="#000"/><rect y="7.0" x="0.5" height="2.4" width="4" rx="0.6" fill="#000"/><rect y="7.0" x="22.5" height="2.4" width="4" rx="0.6" fill="#000"/><rect x="12.3" y="0.5" width="2.4" height="4" rx="0.6" fill="#000"/><rect x="12.3" y="22.5" width="2.4" height="4" rx="0.6" fill="#000"/><rect y="12.3" x="0.5" height="2.4" width="4" rx="0.6" fill="#000"/><rect y="12.3" x="22.5" height="2.4" width="4" rx="0.6" fill="#000"/><rect x="17.6" y="0.5" width="2.4" height="4" rx="0.6" fill="#000"/><rect x="17.6" y="22.5" width="2.4" height="4" rx="0.6" fill="#000"/><rect y="17.6" x="0.5" height="2.4" width="4" rx="0.6" fill="#000"/><rect y="17.6" x="22.5" height="2.4" width="4" rx="0.6" fill="#000"/></svg>
<svg class="abs" style="left:88.4px;top:384.2px" width="30" height="27" viewBox="0 0 30 27"><path d="M15,1 C16,1 16.6,1.5 17.2,2.5 L29.6,23.5 C30.2,24.6 29.6,25.8 28.2,25.8 H1.8 C0.4,25.8 -0.2,24.6 0.4,23.5 L12.8,2.5 C13.4,1.5 14,1 15,1 Z" fill="#f0ad4e"/><rect x="13.3" y="9.5" width="3.4" height="8" fill="#fff"/><circle cx="15" cy="21.2" r="2" fill="#fff"/></svg>
<div class="cell" style="left:224.4px;top:389.7px;width:77.0px;height:24px;padding-left:12.5px;">未申請</div>
<div class="cell" style="left:301.4px;top:389.7px;width:145.5px;height:24px;padding-left:12.5px;letter-spacing:-0.45px;">IR7584397128</div>
<div class="cell" style="left:446.9px;top:389.7px;width:120.3px;height:24px;padding-left:12.5px;">鹿取</div>
<div class="cell" style="left:567.2px;top:389.7px;width:124.6px;height:24px;padding-left:12.5px;">株式会社サンプル</div>
<div class="cell" style="left:931.7px;top:389.7px;width:108.2px;height:24px;padding-left:12.5px;">2021/3/31</div>
<div class="cell" style="left:1039.9px;top:389.7px;width:109.0px;height:24px;padding-left:12.5px;">2021/4/30</div>
<div class="cell" style="left:1148.9px;top:389.7px;width:108.2px;height:24px;padding-left:12.5px;">2021/4/30</div>
<div class="cell" style="left:1257.1px;top:389.7px;width:108.9px;height:24px;padding-left:12.5px;">2021/9/30</div>
<div class="cell" style="left:1430.7px;top:389.7px;width:62.1px;height:24px"><div style="position:absolute;right:12px;top:0">1,100,000</div></div>
<div class="cell" style="left:1492.8px;top:389.7px;width:82.6px;height:24px;padding-left:12.5px;">ファイルアップロード</div>
<div class="cell" style="left:1575.4px;top:389.7px;width:108.3px;height:24px;padding-left:12.5px;">2021/9/30</div>
<svg class="abs" style="left:1695.9px;top:387.7px" width="25" height="24" viewBox="0 0 25 24"><rect x="10" y="1" width="5" height="9" fill="#cccccc"/><path d="M5,9 H20 L12.5,16.5 Z" fill="#cccccc"/><path d="M1,16 C1,15 1.5,14.5 2.5,14.5 H9.5 L12.5,17.5 L15.5,14.5 H22.5 C23.5,14.5 24,15 24,16 V21.5 C24,22.5 23.5,23 22.5,23 H2.5 C1.5,23 1,22.5 1,21.5 Z" fill="#cccccc"/><circle cx="18.5" cy="19.5" r="0.9" fill="#fff"/><circle cx="21" cy="19.5" r="0.9" fill="#fff"/></svg>
<svg class="abs" style="left:1729.2px;top:387.7px" width="25" height="24" viewBox="0 0 25 24"><rect x="10" y="1" width="5" height="9" fill="#cccccc"/><path d="M5,9 H20 L12.5,16.5 Z" fill="#cccccc"/><path d="M1,16 C1,15 1.5,14.5 2.5,14.5 H9.5 L12.5,17.5 L15.5,14.5 H22.5 C23.5,14.5 24,15 24,16 V21.5 C24,22.5 23.5,23 22.5,23 H2.5 C1.5,23 1,22.5 1,21.5 Z" fill="#cccccc"/><circle cx="18.5" cy="19.5" r="0.9" fill="#fff"/><circle cx="21" cy="19.5" r="0.9" fill="#fff"/></svg>
<div class="hl" style="left:0;top:469px;width:1767.9px"></div>
<svg class="abs" style="left:58.9px;top:434.1px" width="27" height="27" viewBox="0 0 27 27"><rect x="4.8" y="4.8" width="17.4" height="17.4" rx="2.2" fill="none" stroke="#000" stroke-width="3"/><rect x="8.3" y="8.3" width="10.4" height="10.4" fill="#000"/><rect x="7.0" y="0.5" width="2.4" height="4" rx="0.6" fill="#000"/><rect x="7.0" y="22.5" width="2.4" height="4" rx="0.6" fill="#000"/><rect y="7.0" x="0.5" height="2.4" width="4" rx="0.6" fill="#000"/><rect y="7.0" x="22.5" height="2.4" width="4" rx="0.6" fill="#000"/><rect x="12.3" y="0.5" width="2.4" height="4" rx="0.6" fill="#000"/><rect x="12.3" y="22.5" width="2.4" height="4" rx="0.6" fill="#000"/><rect y="12.3" x="0.5" height="2.4" width="4" rx="0.6" fill="#000"/><rect y="12.3" x="22.5" height="2.4" width="4" rx="0.6" fill="#000"/><rect x="17.6" y="0.5" width="2.4" height="4" rx="0.6" fill="#000"/><rect x="17.6" y="22.5" width="2.4" height="4" rx="0.6" fill="#000"/><rect y="17.6" x="0.5" height="2.4" width="4" rx="0.6" fill="#000"/><rect y="17.6" x="22.5" height="2.4" width="4" rx="0.6" fill="#000"/></svg>
<svg class="abs" style="left:88.4px;top:432.4px" width="30" height="27" viewBox="0 0 30 27"><path d="M15,1 C16,1 16.6,1.5 17.2,2.5 L29.6,23.5 C30.2,24.6 29.6,25.8 28.2,25.8 H1.8 C0.4,25.8 -0.2,24.6 0.4,23.5 L12.8,2.5 C13.4,1.5 14,1 15,1 Z" fill="#f0ad4e"/><rect x="13.3" y="9.5" width="3.4" height="8" fill="#fff"/><circle cx="15" cy="21.2" r="2" fill="#fff"/></svg>
<svg class="abs" style="left:120.9px;top:433.4px" width="28" height="26" viewBox="0 0 28 26"><path d="M0.5,5 L12,8.5 V25 L0.5,21.5 Z" fill="#000"/><path d="M27.5,5 L16,8.5 V25 L27.5,21.5 Z" fill="#000"/><rect x="12.8" y="9" width="2.4" height="16" fill="#000"/><path d="M3,4 C6,3 9,3.5 12,7 M25,4 C22,3 19,3.5 16,7 M3,2.5 C6,1.5 9,2 12,5.5 M25,2.5 C22,1.5 19,2 16,5.5" stroke="#000" stroke-width="1" fill="none"/></svg>
<div class="cell" style="left:224.4px;top:437.9px;width:77.0px;height:24px;padding-left:12.5px;">未申請</div>
<div class="cell" style="left:301.4px;top:437.9px;width:145.5px;height:24px;padding-left:12.5px;letter-spacing:-0.45px;">IR1561118069</div>
<div class="cell" style="left:446.9px;top:437.9px;width:120.3px;height:24px;padding-left:12.5px;">鹿取</div>
<div class="cell" style="left:567.2px;top:437.9px;width:124.6px;height:24px;padding-left:12.5px;">株式会社サンプル</div>
<div class="cell" style="left:691.8px;top:437.9px;width:120.0px;height:24px;padding-left:12.5px;">営業</div>
<div class="cell" style="left:931.7px;top:437.9px;width:108.2px;height:24px;padding-left:12.5px;">2021/3/31</div>
<div class="cell" style="left:1039.9px;top:437.9px;width:109.0px;height:24px;padding-left:12.5px;">2021/4/30</div>
<div class="cell" style="left:1148.9px;top:437.9px;width:108.2px;height:24px;padding-left:12.5px;">2021/4/30</div>
<div class="cell" style="left:1257.1px;top:437.9px;width:108.9px;height:24px;padding-left:12.5px;">2021/9/14</div>
<div class="cell" style="left:1366.0px;top:437.9px;width:64.7px;height:24px;padding-left:12.5px;">銀行振込</div>
<div class="cell" style="left:1430.7px;top:437.9px;width:62.1px;height:24px"><div style="position:absolute;right:12px;top:0">1,100,000</div></div>
<div class="cell" style="left:1492.8px;top:437.9px;width:82.6px;height:24px;padding-left:12.5px;">ファイルアップロード</div>
<div class="cell" style="left:1575.4px;top:437.9px;width:108.3px;height:24px;padding-left:12.5px;">2021/9/14</div>
<svg class="abs" style="left:1695.9px;top:435.9px" width="25" height="24" viewBox="0 0 25 24"><rect x="10" y="1" width="5" height="9" fill="#cccccc"/><path d="M5,9 H20 L12.5,16.5 Z" fill="#cccccc"/><path d="M1,16 C1,15 1.5,14.5 2.5,14.5 H9.5 L12.5,17.5 L15.5,14.5 H22.5 C23.5,14.5 24,15 24,16 V21.5 C24,22.5 23.5,23 22.5,23 H2.5 C1.5,23 1,22.5 1,21.5 Z" fill="#cccccc"/><circle cx="18.5" cy="19.5" r="0.9" fill="#fff"/><circle cx="21" cy="19.5" r="0.9" fill="#fff"/></svg>
<svg class="abs" style="left:1729.2px;top:435.9px" width="25" height="24" viewBox="0 0 25 24"><rect x="10" y="1" width="5" height="9" fill="#cccccc"/><path d="M5,9 H20 L12.5,16.5 Z" fill="#cccccc"/><path d="M1,16 C1,15 1.5,14.5 2.5,14.5 H9.5 L12.5,17.5 L15.5,14.5 H22.5 C23.5,14.5 24,15 24,16 V21.5 C24,22.5 23.5,23 22.5,23 H2.5 C1.5,23 1,22.5 1,21.5 Z" fill="#cccccc"/><circle cx="18.5" cy="19.5" r="0.9" fill="#fff"/><circle cx="21" cy="19.5" r="0.9" fill="#fff"/></svg>
<div class="hl" style="left:0;top:518px;width:1767.9px"></div>
<svg class="abs" style="left:58.9px;top:482.3px" width="27" height="27" viewBox="0 0 27 27"><rect x="4.8" y="4.8" width="17.4" height="17.4" rx="2.2" fill="none" stroke="#000" stroke-width="3"/><rect x="8.3" y="8.3" width="10.4" height="10.4" fill="#000"/><rect x="7.0" y="0.5" width="2.4" height="4" rx="0.6" fill="#000"/><rect x="7.0" y="22.5" width="2.4" height="4" rx="0.6" fill="#000"/><rect y="7.0" x="0.5" height="2.4" width="4" rx="0.6" fill="#000"/><rect y="7.0" x="22.5" height="2.4" width="4" rx="0.6" fill="#000"/><rect x="12.3" y="0.5" width="2.4" height="4" rx="0.6" fill="#000"/><rect x="12.3" y="22.5" width="2.4" height="4" rx="0.6" fill="#000"/><rect y="12.3" x="0.5" height="2.4" width="4" rx="0.6" fill="#000"/><rect y="12.3" x="22.5" height="2.4" width="4" rx="0.6" fill="#000"/><rect x="17.6" y="0.5" width="2.4" height="4" rx="0.6" fill="#000"/><rect x="17.6" y="22.5" width="2.4" height="4" rx="0.6" fill="#000"/><rect y="17.6" x="0.5" height="2.4" width="4" rx="0.6" fill="#000"/><rect y="17.6" x="22.5" height="2.4" width="4" rx="0.6" fill="#000"/></svg>
<svg class="abs" style="left:88.4px;top:480.6px" width="30" height="27" viewBox="0 0 30 27"><path d="M15,1 C16,1 16.6,1.5 17.2,2.5 L29.6,23.5 C30.2,24.6 29.6,25.8 28.2,25.8 H1.8 C0.4,25.8 -0.2,24.6 0.4,23.5 L12.8,2.5 C13.4,1.5 14,1 15,1 Z" fill="#f0ad4e"/><rect x="13.3" y="9.5" width="3.4" height="8" fill="#fff"/><circle cx="15" cy="21.2" r="2" fill="#fff"/></svg>
<div class="cell" style="left:224.4px;top:486.1px;width:77.0px;height:24px;padding-left:12.5px;">未申請</div>
<div class="cell" style="left:301.4px;top:486.1px;width:145.5px;height:24px;padding-left:12.5px;letter-spacing:-0.45px;">IR6657140310</div>
<div class="cell" style="left:446.9px;top:486.1px;width:120.3px;height:24px;padding-left:12.5px;">テスト</div>
<div class="cell" style="left:567.2px;top:486.1px;width:124.6px;height:24px;padding-left:12.5px;">株式会社サンプル</div>
<div class="cell" style="left:931.7px;top:486.1px;width:108.2px;height:24px;padding-left:12.5px;">2021/8/1</div>
<div class="cell" style="left:1039.9px;top:486.1px;width:109.0px;height:24px;padding-left:12.5px;">2021/8/31</div>
<div class="cell" style="left:1148.9px;top:486.1px;width:108.2px;height:24px;padding-left:12.5px;">2021/8/31</div>
<div class="cell" style="left:1257.1px;top:486.1px;width:108.9px;height:24px;padding-left:12.5px;">2021/8/3</div>
<div class="cell" style="left:1430.7px;top:486.1px;width:62.1px;height:24px"><div style="position:absolute;right:12px;top:0">110,000</div></div>
<div class="cell" style="left:1492.8px;top:486.1px;width:82.6px;height:24px;padding-left:12.5px;">ファイルアップロード</div>
<div class="cell" style="left:1575.4px;top:486.1px;width:108.3px;height:24px;padding-left:12.5px;">2021/8/26</div>
<svg class="abs" style="left:1695.9px;top:484.1px" width="25" height="24" viewBox="0 0 25 24"><rect x="10" y="1" width="5" height="9" fill="#cccccc"/><path d="M5,9 H20 L12.5,16.5 Z" fill="#cccccc"/><path d="M1,16 C1,15 1.5,14.5 2.5,14.5 H9.5 L12.5,17.5 L15.5,14.5 H22.5 C23.5,14.5 24,15 24,16 V21.5 C24,22.5 23.5,23 22.5,23 H2.5 C1.5,23 1,22.5 1,21.5 Z" fill="#cccccc"/><circle cx="18.5" cy="19.5" r="0.9" fill="#fff"/><circle cx="21" cy="19.5" r="0.9" fill="#fff"/></svg>
<svg class="abs" style="left:1729.2px;top:484.1px" width="25" height="24" viewBox="0 0 25 24"><rect x="10" y="1" width="5" height="9" fill="#cccccc"/><path d="M5,9 H20 L12.5,16.5 Z" fill="#cccccc"/><path d="M1,16 C1,15 1.5,14.5 2.5,14.5 H9.5 L12.5,17.5 L15.5,14.5 H22.5 C23.5,14.5 24,15 24,16 V21.5 C24,22.5 23.5,23 22.5,23 H2.5 C1.5,23 1,22.5 1,21.5 Z" fill="#cccccc"/><circle cx="18.5" cy="19.5" r="0.9" fill="#fff"/><circle cx="21" cy="19.5" r="0.9" fill="#fff"/></svg>
<div class="hl" style="left:0;top:566px;width:1767.9px"></div>
<svg class="abs" style="left:58.9px;top:530.5px" width="27" height="27" viewBox="0 0 27 27"><rect x="4.8" y="4.8" width="17.4" height="17.4" rx="2.2" fill="none" stroke="#000" stroke-width="3"/><rect x="8.3" y="8.3" width="10.4" height="10.4" fill="#000"/><rect x="7.0" y="0.5" width="2.4" height="4" rx="0.6" fill="#000"/><rect x="7.0" y="22.5" width="2.4" height="4" rx="0.6" fill="#000"/><rect y="7.0" x="0.5" height="2.4" width="4" rx="0.6" fill="#000"/><rect y="7.0" x="22.5" height="2.4" width="4" rx="0.6" fill="#000"/><rect x="12.3" y="0.5" width="2.4" height="4" rx="0.6" fill="#000"/><rect x="12.3" y="22.5" width="2.4" height="4" rx="0.6" fill="#000"/><rect y="12.3" x="0.5" height="2.4" width="4" rx="0.6" fill="#000"/><rect y="12.3" x="22.5" height="2.4" width="4" rx="0.6" fill="#000"/><rect x="17.6" y="0.5" width="2.4" height="4" rx="0.6" fill="#000"/><rect x="17.6" y="22.5" width="2.4" height="4" rx="0.6" fill="#000"/><rect y="17.6" x="0.5" height="2.4" width="4" rx="0.6" fill="#000"/><rect y="17.6" x="22.5" height="2.4" width="4" rx="0.6" fill="#000"/></svg>
<svg class="abs" style="left:88.4px;top:528.8px" width="30" height="27" viewBox="0 0 30 27"><path d="M15,1 C16,1 16.6,1.5 17.2,2.5 L29.6,23.5 C30.2,24.6 29.6,25.8 28.2,25.8 H1.8 C0.4,25.8 -0.2,24.6 0.4,23.5 L12.8,2.5 C13.4,1.5 14,1 15,1 Z" fill="#f0ad4e"/><rect x="13.3" y="9.5" width="3.4" height="8" fill="#fff"/><circle cx="15" cy="21.2" r="2" fill="#fff"/></svg>
<div class="cell" style="left:224.4px;top:534.3px;width:77.0px;height:24px;padding-left:12.5px;">未申請</div>
<div class="cell" style="left:301.4px;top:534.3px;width:145.5px;height:24px;padding-left:12.5px;letter-spacing:-0.45px;">IR1811454319</div>
<div class="cell" style="left:446.9px;top:534.3px;width:120.3px;height:24px;padding-left:12.5px;">テスト</div>
<div class="cell" style="left:567.2px;top:534.3px;width:124.6px;height:24px;padding-left:12.5px;">株式会社サンプル</div>
<div class="cell" style="left:931.7px;top:534.3px;width:108.2px;height:24px;padding-left:12.5px;">2021/8/1</div>
<div class="cell" style="left:1039.9px;top:534.3px;width:109.0px;height:24px;padding-left:12.5px;">2021/8/31</div>
<div class="cell" style="left:1148.9px;top:534.3px;width:108.2px;height:24px;padding-left:12.5px;">2021/8/31</div>
<div class="cell" style="left:1257.1px;top:534.3px;width:108.9px;height:24px;padding-left:12.5px;">2021/10/8</div>
<div class="cell" style="left:1430.7px;top:534.3px;width:62.1px;height:24px"><div style="position:absolute;right:12px;top:0">110,000</div></div>
<div class="cell" style="left:1492.8px;top:534.3px;width:82.6px;height:24px;padding-left:12.5px;">ファイルアップロード</div>
<div class="cell" style="left:1575.4px;top:534.3px;width:108.3px;height:24px;padding-left:12.5px;">2021/8/26</div>
<svg class="abs" style="left:1695.9px;top:532.3px" width="25" height="24" viewBox="0 0 25 24"><rect x="10" y="1" width="5" height="9" fill="#cccccc"/><path d="M5,9 H20 L12.5,16.5 Z" fill="#cccccc"/><path d="M1,16 C1,15 1.5,14.5 2.5,14.5 H9.5 L12.5,17.5 L15.5,14.5 H22.5 C23.5,14.5 24,15 24,16 V21.5 C24,22.5 23.5,23 22.5,23 H2.5 C1.5,23 1,22.5 1,21.5 Z" fill="#cccccc"/><circle cx="18.5" cy="19.5" r="0.9" fill="#fff"/><circle cx="21" cy="19.5" r="0.9" fill="#fff"/></svg>
<svg class="abs" style="left:1729.2px;top:532.3px" width="25" height="24" viewBox="0 0 25 24"><rect x="10" y="1" width="5" height="9" fill="#cccccc"/><path d="M5,9 H20 L12.5,16.5 Z" fill="#cccccc"/><path d="M1,16 C1,15 1.5,14.5 2.5,14.5 H9.5 L12.5,17.5 L15.5,14.5 H22.5 C23.5,14.5 24,15 24,16 V21.5 C24,22.5 23.5,23 22.5,23 H2.5 C1.5,23 1,22.5 1,21.5 Z" fill="#cccccc"/><circle cx="18.5" cy="19.5" r="0.9" fill="#fff"/><circle cx="21" cy="19.5" r="0.9" fill="#fff"/></svg>
<div class="hl" style="left:0;top:614px;width:1767.9px"></div>
<svg class="abs" style="left:58.9px;top:578.7px" width="27" height="27" viewBox="0 0 27 27"><rect x="4.8" y="4.8" width="17.4" height="17.4" rx="2.2" fill="none" stroke="#000" stroke-width="3"/><rect x="8.3" y="8.3" width="10.4" height="10.4" fill="#000"/><rect x="7.0" y="0.5" width="2.4" height="4" rx="0.6" fill="#000"/><rect x="7.0" y="22.5" width="2.4" height="4" rx="0.6" fill="#000"/><rect y="7.0" x="0.5" height="2.4" width="4" rx="0.6" fill="#000"/><rect y="7.0" x="22.5" height="2.4" width="4" rx="0.6" fill="#000"/><rect x="12.3" y="0.5" width="2.4" height="4" rx="0.6" fill="#000"/><rect x="12.3" y="22.5" width="2.4" height="4" rx="0.6" fill="#000"/><rect y="12.3" x="0.5" height="2.4" width="4" rx="0.6" fill="#000"/><rect y="12.3" x="22.5" height="2.4" width="4" rx="0.6" fill="#000"/><rect x="17.6" y="0.5" width="2.4" height="4" rx="0.6" fill="#000"/><rect x="17.6" y="22.5" width="2.4" height="4" rx="0.6" fill="#000"/><rect y="17.6" x="0.5" height="2.4" width="4" rx="0.6" fill="#000"/><rect y="17.6" x="22.5" height="2.4" width="4" rx="0.6" fill="#000"/></svg>
<svg class="abs" style="left:88.4px;top:577.0px" width="30" height="27" viewBox="0 0 30 27"><path d="M15,1 C16,1 16.6,1.5 17.2,2.5 L29.6,23.5 C30.2,24.6 29.6,25.8 28.2,25.8 H1.8 C0.4,25.8 -0.2,24.6 0.4,23.5 L12.8,2.5 C13.4,1.5 14,1 15,1 Z" fill="#f0ad4e"/><rect x="13.3" y="9.5" width="3.4" height="8" fill="#fff"/><circle cx="15" cy="21.2" r="2" fill="#fff"/></svg>
<svg class="abs" style="left:120.9px;top:578.0px" width="28" height="26" viewBox="0 0 28 26"><path d="M0.5,5 L12,8.5 V25 L0.5,21.5 Z" fill="#000"/><path d="M27.5,5 L16,8.5 V25 L27.5,21.5 Z" fill="#000"/><rect x="12.8" y="9" width="2.4" height="16" fill="#000"/><path d="M3,4 C6,3 9,3.5 12,7 M25,4 C22,3 19,3.5 16,7 M3,2.5 C6,1.5 9,2 12,5.5 M25,2.5 C22,1.5 19,2 16,5.5" stroke="#000" stroke-width="1" fill="none"/></svg>
<div class="cell" style="left:224.4px;top:582.5px;width:77.0px;height:24px;padding-left:12.5px;">未申請</div>
<div class="cell" style="left:301.4px;top:582.5px;width:145.5px;height:24px;padding-left:12.5px;letter-spacing:-0.45px;">IR9562007502</div>
<div class="cell" style="left:446.9px;top:582.5px;width:120.3px;height:24px;padding-left:12.5px;">市川</div>
<div class="cell" style="left:567.2px;top:582.5px;width:124.6px;height:24px;padding-left:12.5px;">10101:株式会社サンプル</div>
<div class="cell" style="left:691.8px;top:582.5px;width:120.0px;height:24px;padding-left:12.5px;">開発</div>
<div class="cell" style="left:931.7px;top:582.5px;width:108.2px;height:24px;padding-left:12.5px;">2020/5/26</div>
<div class="cell" style="left:1039.9px;top:582.5px;width:109.0px;height:24px;padding-left:12.5px;">2020/6/1</div>
<div class="cell" style="left:1148.9px;top:582.5px;width:108.2px;height:24px;padding-left:12.5px;">2020/6/1</div>
<div class="cell" style="left:1257.1px;top:582.5px;width:108.9px;height:24px;padding-left:12.5px;">2021/9/30</div>
<div class="cell" style="left:1430.7px;top:582.5px;width:62.1px;height:24px"><div style="position:absolute;right:12px;top:0">143,000</div></div>
<div class="cell" style="left:1492.8px;top:582.5px;width:82.6px;height:24px;padding-left:12.5px;">ファイルアップロード</div>
<div class="cell" style="left:1575.4px;top:582.5px;width:108.3px;height:24px;padding-left:12.5px;">2021/10/8</div>
<svg class="abs" style="left:1695.9px;top:580.5px" width="25" height="24" viewBox="0 0 25 24"><rect x="10" y="1" width="5" height="9" fill="#cccccc"/><path d="M5,9 H20 L12.5,16.5 Z" fill="#cccccc"/><path d="M1,16 C1,15 1.5,14.5 2.5,14.5 H9.5 L12.5,17.5 L15.5,14.5 H22.5 C23.5,14.5 24,15 24,16 V21.5 C24,22.5 23.5,23 22.5,23 H2.5 C1.5,23 1,22.5 1,21.5 Z" fill="#cccccc"/><circle cx="18.5" cy="19.5" r="0.9" fill="#fff"/><circle cx="21" cy="19.5" r="0.9" fill="#fff"/></svg>
<svg class="abs" style="left:1729.2px;top:580.5px" width="25" height="24" viewBox="0 0 25 24"><rect x="10" y="1" width="5" height="9" fill="#cccccc"/><path d="M5,9 H20 L12.5,16.5 Z" fill="#cccccc"/><path d="M1,16 C1,15 1.5,14.5 2.5,14.5 H9.5 L12.5,17.5 L15.5,14.5 H22.5 C23.5,14.5 24,15 24,16 V21.5 C24,22.5 23.5,23 22.5,23 H2.5 C1.5,23 1,22.5 1,21.5 Z" fill="#cccccc"/><circle cx="18.5" cy="19.5" r="0.9" fill="#fff"/><circle cx="21" cy="19.5" r="0.9" fill="#fff"/></svg>
<div class="hl" style="left:0;top:662px;width:1767.9px"></div>
<svg class="abs" style="left:58.9px;top:626.7px" width="27" height="27" viewBox="0 0 27 27"><polygon points="13.30,0.10 16.25,2.29 19.90,1.87 21.36,5.24 24.73,6.70 24.31,10.35 26.50,13.30 24.31,16.25 24.73,19.90 21.36,21.36 19.90,24.73 16.25,24.31 13.30,26.50 10.35,24.31 6.70,24.73 5.24,21.36 1.87,19.90 2.29,16.25 0.10,13.30 2.29,10.35 1.87,6.70 5.24,5.24 6.70,1.87 10.35,2.29" fill="#000" stroke="#000" stroke-width="1.2" stroke-linejoin="round"/><path d="M7.2,14.2 L11.2,18 L19.8,9.2" stroke="#fff" stroke-width="3.2" fill="none" stroke-linecap="butt"/></svg>
<svg class="abs" style="left:88.4px;top:625.2px" width="30" height="27" viewBox="0 0 30 27"><path d="M15,1 C16,1 16.6,1.5 17.2,2.5 L29.6,23.5 C30.2,24.6 29.6,25.8 28.2,25.8 H1.8 C0.4,25.8 -0.2,24.6 0.4,23.5 L12.8,2.5 C13.4,1.5 14,1 15,1 Z" fill="#f0ad4e"/><rect x="13.3" y="9.5" width="3.4" height="8" fill="#fff"/><circle cx="15" cy="21.2" r="2" fill="#fff"/></svg>
<svg class="abs" style="left:120.9px;top:626.2px" width="28" height="26" viewBox="0 0 28 26"><path d="M0.5,5 L12,8.5 V25 L0.5,21.5 Z" fill="#000"/><path d="M27.5,5 L16,8.5 V25 L27.5,21.5 Z" fill="#000"/><rect x="12.8" y="9" width="2.4" height="16" fill="#000"/><path d="M3,4 C6,3 9,3.5 12,7 M25,4 C22,3 19,3.5 16,7 M3,2.5 C6,1.5 9,2 12,5.5 M25,2.5 C22,1.5 19,2 16,5.5" stroke="#000" stroke-width="1" fill="none"/></svg>
<svg class="abs" style="left:183.9px;top:625.2px" width="27" height="27" viewBox="0 0 27 27"><path d="M3.5,1.5 H23.5 C24.7,1.5 25.5,2.3 25.5,3.5 V17.5 C25.5,18.7 24.7,19.5 23.5,19.5 H12 L4.5,25.5 V19.5 H3.5 C2.3,19.5 1.5,18.7 1.5,17.5 V3.5 C1.5,2.3 2.3,1.5 3.5,1.5 Z" fill="none" stroke="#000" stroke-width="2.4" stroke-linejoin="round"/><rect x="6.5" y="6.5" width="14" height="2.2" rx="1" fill="#000"/><rect x="6.5" y="11.5" width="14" height="2.2" rx="1" fill="#000"/></svg>
<div class="cell" style="left:224.4px;top:630.7px;width:77.0px;height:24px;padding-left:12.5px;">未申請</div>
<div class="cell" style="left:301.4px;top:630.7px;width:145.5px;height:24px;padding-left:12.5px;letter-spacing:-0.45px;">IR9560543417</div>
<div class="cell" style="left:446.9px;top:630.7px;width:120.3px;height:24px;padding-left:12.5px;">テスト</div>
<div class="cell" style="left:567.2px;top:630.7px;width:124.6px;height:24px;padding-left:12.5px;">10101:株式会社サンプル</div>
<div class="cell" style="left:691.8px;top:630.7px;width:120.0px;height:24px;padding-left:12.5px;">開発</div>
<div class="cell" style="left:811.8px;top:630.7px;width:119.9px;height:24px;padding-left:12.5px;">001 A部署</div>
<div class="cell" style="left:931.7px;top:630.7px;width:108.2px;height:24px;padding-left:12.5px;">2020/5/26</div>
<div class="cell" style="left:1039.9px;top:630.7px;width:109.0px;height:24px;padding-left:12.5px;">2020/5/30</div>
<div class="cell" style="left:1148.9px;top:630.7px;width:108.2px;height:24px;padding-left:12.5px;">2020/5/30</div>
<div class="cell" style="left:1257.1px;top:630.7px;width:108.9px;height:24px;padding-left:12.5px;">2020/6/30</div>
<div class="cell" style="left:1366.0px;top:630.7px;width:64.7px;height:24px;padding-left:12.5px;">銀行振込</div>
<div class="cell" style="left:1430.7px;top:630.7px;width:62.1px;height:24px"><div style="position:absolute;right:12px;top:0">24,600</div></div>
<div class="cell" style="left:1492.8px;top:630.7px;width:82.6px;height:24px;padding-left:12.5px;">ファイルアップロード</div>
<div class="cell" style="left:1575.4px;top:630.7px;width:108.3px;height:24px;padding-left:12.5px;">2020/9/25</div>
<svg class="abs" style="left:1695.9px;top:628.7px" width="25" height="24" viewBox="0 0 25 24"><rect x="10" y="1" width="5" height="9" fill="#cccccc"/><path d="M5,9 H20 L12.5,16.5 Z" fill="#cccccc"/><path d="M1,16 C1,15 1.5,14.5 2.5,14.5 H9.5 L12.5,17.5 L15.5,14.5 H22.5 C23.5,14.5 24,15 24,16 V21.5 C24,22.5 23.5,23 22.5,23 H2.5 C1.5,23 1,22.5 1,21.5 Z" fill="#cccccc"/><circle cx="18.5" cy="19.5" r="0.9" fill="#fff"/><circle cx="21" cy="19.5" r="0.9" fill="#fff"/></svg>
<svg class="abs" style="left:1729.2px;top:628.7px" width="25" height="24" viewBox="0 0 25 24"><rect x="10" y="1" width="5" height="9" fill="#cccccc"/><path d="M5,9 H20 L12.5,16.5 Z" fill="#cccccc"/><path d="M1,16 C1,15 1.5,14.5 2.5,14.5 H9.5 L12.5,17.5 L15.5,14.5 H22.5 C23.5,14.5 24,15 24,16 V21.5 C24,22.5 23.5,23 22.5,23 H2.5 C1.5,23 1,22.5 1,21.5 Z" fill="#cccccc"/><circle cx="18.5" cy="19.5" r="0.9" fill="#fff"/><circle cx="21" cy="19.5" r="0.9" fill="#fff"/></svg>
<div class="vl" style="left:0.0px;top:36.2px;height:600.3px"></div>
<div class="vl" style="left:43.8px;top:36.2px;height:600.3px"></div>
<div class="vl" style="left:224.4px;top:36.2px;height:600.3px"></div>
<div class="vl" style="left:301.4px;top:36.2px;height:600.3px"></div>
<div class="vl" style="left:446.9px;top:36.2px;height:600.3px"></div>
<div class="vl" style="left:567.2px;top:36.2px;height:600.3px"></div>
<div class="vl" style="left:691.8px;top:36.2px;height:600.3px"></div>
<div class="vl" style="left:811.8px;top:36.2px;height:600.3px"></div>
<div class="vl" style="left:931.7px;top:36.2px;height:600.3px"></div>
<div class="vl" style="left:1039.9px;top:36.2px;height:600.3px"></div>
<div class="vl" style="left:1148.9px;top:36.2px;height:600.3px"></div>
<div class="vl" style="left:1257.1px;top:36.2px;height:600.3px"></div>
<div class="vl" style="left:1366.0px;top:36.2px;height:600.3px"></div>
<div class="vl" style="left:1430.7px;top:36.2px;height:600.3px"></div>
<div class="vl" style="left:1492.8px;top:36.2px;height:600.3px"></div>
<div class="vl" style="left:1575.4px;top:36.2px;height:600.3px"></div>
<div class="vl" style="left:1683.7px;top:36.2px;height:600.3px"></div>
<div class="vl" style="left:1767.9px;top:36.2px;height:600.3px"></div>
<div class="cb" style="left:13.4px;top:52.5px"></div>
<div class="cb" style="left:13.4px;top:100.7px"></div>
<div class="cb" style="left:13.4px;top:148.9px"></div>
<div class="cb" style="left:13.4px;top:197.1px"></div>
<div class="cb" style="left:13.4px;top:245.3px"></div>
<div class="cb" style="left:13.4px;top:293.5px"></div>
<div class="cb" style="left:13.4px;top:341.7px"></div>
<div class="cb" style="left:13.4px;top:389.9px"></div>
<div class="cb" style="left:13.4px;top:438.1px"></div>
<div class="cb" style="left:13.4px;top:486.3px"></div>
<div class="cb" style="left:13.4px;top:534.5px"></div>
<div class="cb" style="left:13.4px;top:582.7px"></div>
<div class="cb" style="left:13.4px;top:630.9px"></div>
<div class="abs" style="left:1766.4px;top:36.2px;width:14.7px;height:600.3px;background:#f1f1f1"></div>
<div class="abs" style="left:1768.9px;top:51.0px;width:11.0px;height:354.5px;background:#c1c1c1"></div>
<div class="abs" style="left:1770.7px;top:42.6px;width:0;height:0;border-left:3.2px solid transparent;border-right:3.2px solid transparent;border-bottom:3.5px solid #a3a3a3"></div>
<div class="abs" style="left:1770.7px;top:628.5px;width:0;height:0;border-left:3.2px solid transparent;border-right:3.2px solid transparent;border-top:3.5px solid #505050"></div>
</div>
<div class="abs" style="left:504.8px;top:188px;width:241px;height:384px;background:#fff;border:1px solid #e4e4e4;border-top:1px solid #e8e8e8;border-radius:3px"></div>
<div class="abs" style="left:504.8px;top:195.5px;width:1.5px;height:30.1px;background:#c9cdd5"></div>
<div class="abs" style="left:744.3px;top:195.5px;width:1.5px;height:30.1px;background:#c9cdd5"></div>
<div class="abs" style="left:504.8px;top:241.0px;width:1.5px;height:29.0px;background:#c9cdd5"></div>
<div class="abs" style="left:744.3px;top:241.0px;width:1.5px;height:29.0px;background:#c9cdd5"></div>
<div class="dd" style="top:237.5px">警告・エラーあり</div>
<div class="dd" style="top:271.5px">警告・エラーなし</div>
<div class="dd" style="top:304.5px">辞書あり</div>
<div class="dd" style="top:337.5px">辞書なし</div>
<div class="dd" style="top:371.5px">添付ファイルあり</div>
<div class="dd" style="top:405.5px">添付ファイルなし</div>
<div class="dd" style="top:438.5px">メモあり</div>
<div class="dd" style="top:472.5px">メモなし</div>
<div class="dd" style="top:505.5px">オペレータ確認あり</div>
<div class="dd" style="top:538.5px">オペレータ確認なし</div>
<div class="abs" style="left:505.6px;top:496.3px;width:236.6px;height:77px;border:2.8px solid #fc2d6c;border-radius:4.5px;box-shadow:inset 1px 2px 4px rgba(0,0,0,0.22),0 1px 3px rgba(0,0,0,0.22)"></div>
<svg class="abs" style="left:0;top:0;overflow:visible" width="2048" height="1062" viewBox="0 0 2048 1062">
<defs><filter id="sh" x="-10%" y="-10%" width="130%" height="150%"><feDropShadow dx="1" dy="2" stdDeviation="1.5" flood-color="#000" flood-opacity="0.3"/></filter></defs>
<g filter="url(#sh)"><path d="M497.8,553.3 L347.2,602.2 L345.4,599.3 L334.2,609.3 L349.3,611 L348.4,607.2 L498.4,555.3 Z" fill="#fc2d6c"/></g>
</svg>
</body></html>
